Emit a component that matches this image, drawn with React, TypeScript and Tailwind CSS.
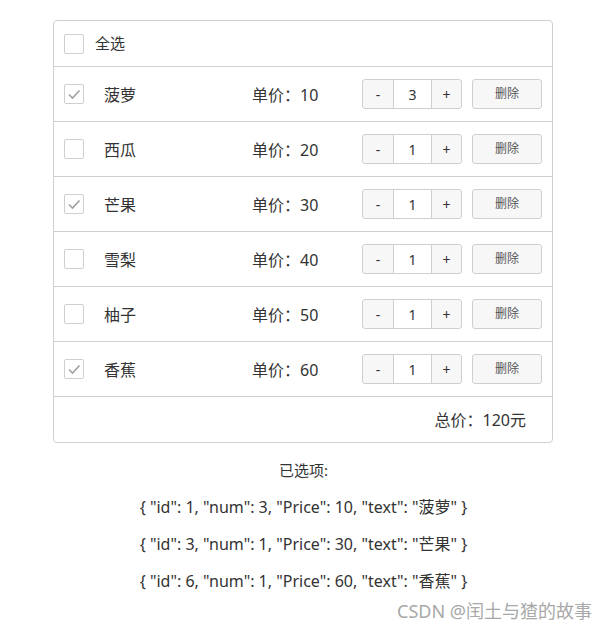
import React, { useState } from 'react';

type Item = { id: number; num: number; Price: number; text: string };

const initial: Item[] = [
    { id: 1, num: 3, Price: 10, text: '菠萝' },
    { id: 2, num: 1, Price: 20, text: '西瓜' },
    { id: 3, num: 1, Price: 30, text: '芒果' },
    { id: 4, num: 1, Price: 40, text: '雪梨' },
    { id: 5, num: 1, Price: 50, text: '柚子' },
    { id: 6, num: 1, Price: 60, text: '香蕉' },
];

const font = { fontFamily: '"Noto Sans", "Noto Sans CJK SC", sans-serif' };

const Check: React.FC<{ checked: boolean; onClick: () => void }> = ({ checked, onClick }) => (
    <button
        onClick={onClick}
        className="w-[20px] h-[20px] shrink-0 border border-[#cfcfcf] rounded-[2px] bg-white flex items-center justify-center"
    >
        {checked && (
            <svg width="14" height="14" viewBox="0 0 14 14" fill="none">
                <path d="M2 7.5 L5.5 11 L12.5 3.5" stroke="#a0a0a0" strokeWidth="1.6" />
            </svg>
        )}
    </button>
);

export default function App() {
    const [items, setItems] = useState<Item[]>(initial);
    const [selected, setSelected] = useState<number[]>([1, 3, 6]);

    const toggle = (id: number) =>
        setSelected(prev => (prev.includes(id) ? prev.filter(x => x !== id) : [...prev, id]));

    const allChecked = items.length > 0 && items.every(i => selected.includes(i.id));
    const toggleAll = () => setSelected(allChecked ? [] : items.map(i => i.id));

    const change = (id: number, d: number) =>
        setItems(prev => prev.map(i => (i.id === id ? { ...i, num: Math.max(1, i.num + d) } : i)));

    const remove = (id: number) => {
        setItems(prev => prev.filter(i => i.id !== id));
        setSelected(prev => prev.filter(x => x !== id));
    };

    const chosen = items.filter(i => selected.includes(i.id));
    const total = chosen.reduce((s, i) => s + i.num * i.Price, 0);

    return (
        <div className="relative w-[607px] h-[633px] bg-white text-[#333]" style={font}>
            <div className="pt-[20px]">
                <div className="ml-[53px] w-[500px] border border-[#cfcfcf] rounded-[4px]">
                    <div className="h-[46px] border-b border-[#cfcfcf] flex items-center pl-[10px]">
                        <Check checked={allChecked} onClick={toggleAll} />
                        <span className="ml-[11px] text-[15px]">全选</span>
                    </div>
                    {items.map(item => (
                        <div key={item.id} className="h-[55px] border-b border-[#cfcfcf] flex items-center pl-[10px]">
                            <Check checked={selected.includes(item.id)} onClick={() => toggle(item.id)} />
                            <span className="ml-[20px] w-[148px] text-[16px] pt-[2px]">{item.text}</span>
                            <span className="w-[110px] text-[16px] pt-[2px]">单价：{item.Price}</span>
                            <div className="flex h-[30px] border border-[#cfcfcf] rounded-[3px] bg-[#f7f7f7]">
                                <button onClick={() => change(item.id, -1)} className="w-[30px] text-[14px] text-[#333]">-</button>
                                <div className="w-[39px] bg-white border-x border-[#cfcfcf] flex items-center justify-center text-[14px]">
                                    {item.num}
                                </div>
                                <button onClick={() => change(item.id, 1)} className="w-[29px] text-[14px] text-[#333]">+</button>
                            </div>
                            <button
                                onClick={() => remove(item.id)}
                                className="ml-[10px] w-[70px] h-[30px] border border-[#cfcfcf] rounded-[3px] bg-[#f7f7f7] text-[12px] text-[#555]"
                            >
                                删除
                            </button>
                        </div>
                    ))}
                    <div className="h-[45px] flex items-center justify-end pr-[26px] text-[16px]">
                        总价：{total}元
                    </div>
                </div>
                <div className="mt-[16px] text-center">
                    <div className="leading-[22px] text-[15px]">已选项:</div>
                    <div className="mt-[15px] flex flex-col gap-[15px] text-[16px]">
                        {chosen.map(i => (
                            <div key={i.id} className="leading-[22px]">
                                {`{ "id": ${i.id}, "num": ${i.num}, "Price": ${i.Price}, "text": "${i.text}" }`}
                            </div>
                        ))}
                    </div>
                </div>
            </div>
            <div className="absolute right-[15px] bottom-[8px] text-[18px] text-[#a8a8a8]">CSDN @闰土与猹的故事</div>
        </div>
    );
}
